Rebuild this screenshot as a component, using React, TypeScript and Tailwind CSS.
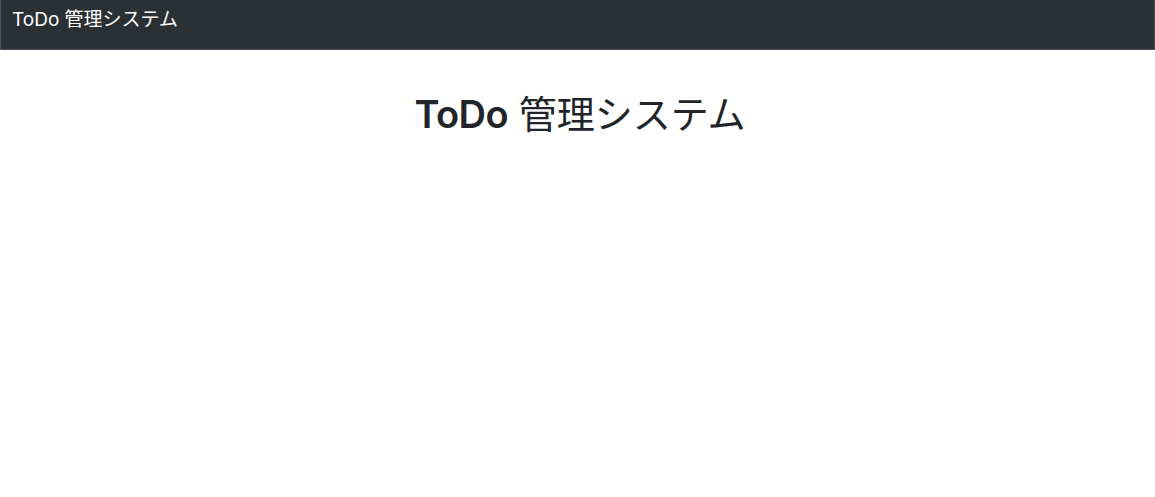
import React from 'react';

export default function App() {
    return (
        <div className="min-h-screen bg-white font-['Inter','Noto_Sans_CJK_JP',sans-serif] text-[#212529]">
            {/* ナビバー */}
            <nav className="h-[50px] bg-[#2b3035] border-x border-b border-[#4d5359] flex items-start">
                <span className="pl-[11px] pt-[5px] text-[19px] leading-[30px] text-white">
                    ToDo 管理システム
                </span>
            </nav>

            <main className="pt-[41px] pl-[5px] text-center">
                <h1 className="text-[38px] leading-[46px]">
                    <span className="font-semibold tracking-[-0.6px]">ToDo</span> <span className="font-normal">管理システム</span>
                </h1>
            </main>
        </div>
    );
}
